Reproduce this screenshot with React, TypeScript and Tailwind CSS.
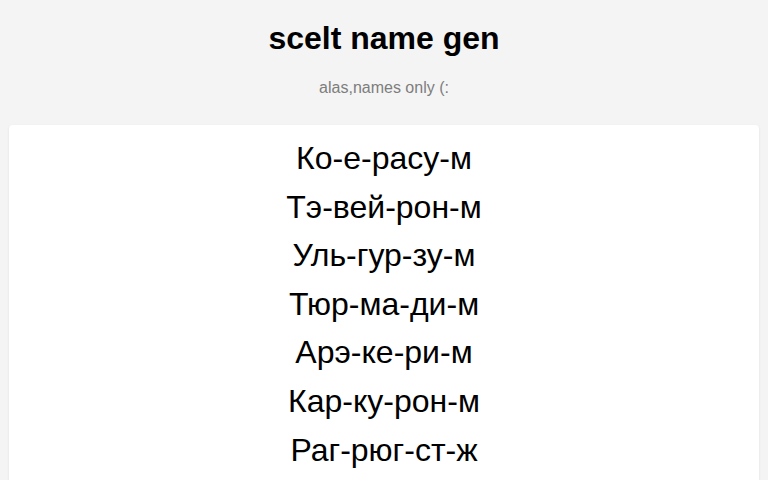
import React from "react";

const names = [
  "Ко-е-расу-м",
  "Тэ-вей-рон-м",
  "Уль-гур-зу-м",
  "Тюр-ма-ди-м",
  "Арэ-ке-ри-м",
  "Кар-ку-рон-м",
  "Раг-рюг-ст-ж",
];

export default function App() {
  return (
    <div className="min-h-[480px] bg-[#f4f4f4] px-[9px] pt-[20px] text-center font-['Liberation_Sans',Arial,sans-serif]">
      <h1 className="text-[32px] font-bold leading-[37px] text-black">scelt name gen</h1>
      <p className="mt-[22px] text-[16px] leading-[18px] text-[#7d7d7d]">alas,names only (:</p>
      <div className="mt-[28px] rounded-[4px] bg-white pt-[9px] pb-[10px] shadow-[0_1px_3px_rgba(0,0,0,0.08)]">
        {names.map((n) => (
          <div key={n} className="text-[32px] leading-[48.6px] text-black">
            {n}
          </div>
        ))}
      </div>
    </div>
  );
}
